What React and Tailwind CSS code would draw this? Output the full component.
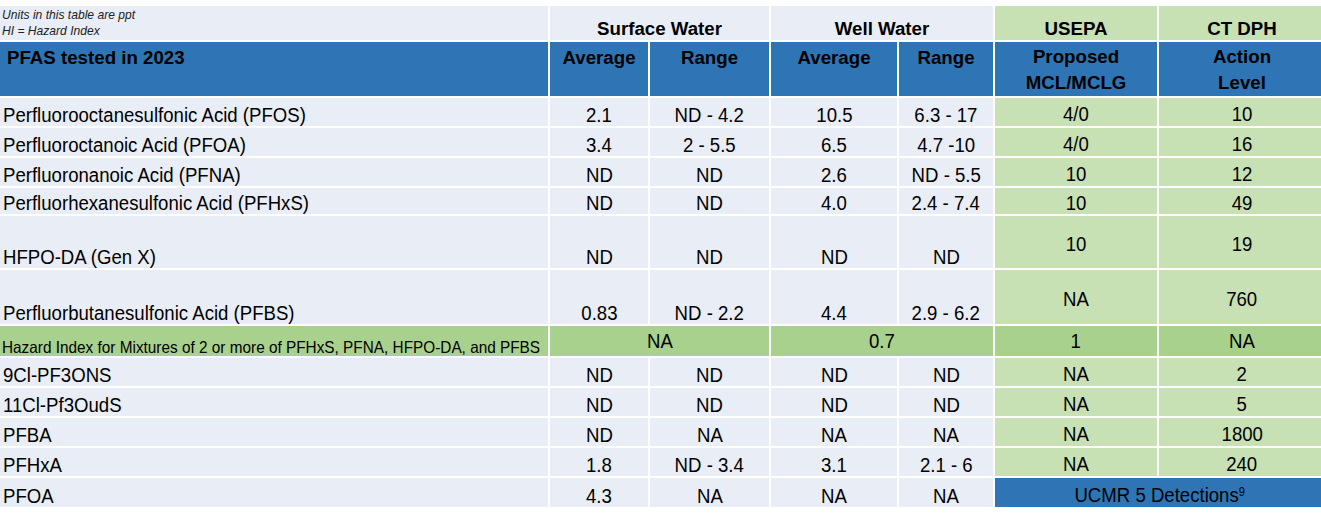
export default function App() {
  const font = { fontFamily: '"Liberation Sans", Arial, sans-serif' };

  const rows = [
    { name: "Perfluorooctanesulfonic Acid (PFOS)", h: "h-[28px]", v: ["2.1", "ND - 4.2", "10.5", "6.3 - 17"], epa: "4/0", ct: "10" },
    { name: "Perfluoroctanoic Acid (PFOA)", h: "h-[28px]", v: ["3.4", "2 - 5.5", "6.5", "4.7 -10"], epa: "4/0", ct: "16" },
    { name: "Perfluoronanoic Acid (PFNA)", h: "h-[28px]", v: ["ND", "ND", "2.6", "ND - 5.5"], epa: "10", ct: "12" },
    { name: "Perfluorhexanesulfonic Acid (PFHxS)", h: "h-[26px]", v: ["ND", "ND", "4.0", "2.4 - 7.4"], epa: "10", ct: "49" },
    { name: "HFPO-DA (Gen X)", h: "h-[52px]", v: ["ND", "ND", "ND", "ND"], epa: "10", ct: "19" },
    { name: "Perfluorbutanesulfonic Acid (PFBS)", h: "h-[54px]", v: ["0.83", "ND - 2.2", "4.4", "2.9 - 6.2"], epa: "NA", ct: "760" },
  ];

  const rows2 = [
    { name: "9Cl-PF3ONS", h: "h-[28px]", v: ["ND", "ND", "ND", "ND"], epa: "NA", ct: "2" },
    { name: "11Cl-Pf3OudS", h: "h-[28px]", v: ["ND", "ND", "ND", "ND"], epa: "NA", ct: "5" },
    { name: "PFBA", h: "h-[28px]", v: ["ND", "NA", "NA", "NA"], epa: "NA", ct: "1800" },
    { name: "PFHxA", h: "h-[28px]", v: ["1.8", "ND - 3.4", "3.1", "2.1 - 6"], epa: "NA", ct: "240" },
  ];

  const light = "bg-[#e9edf5]";
  const blue = "bg-[#2e75b6]";
  const hi = "bg-[#a9d18e]";
  const top = "flex items-end justify-center pb-[1px] text-[18.7px] font-bold leading-none";
  const head = "pt-[4px] text-center text-[18.7px] font-bold leading-[24px]";

  return (
    <div className="bg-white w-[1321px] h-[522px] pt-[6px] text-black" style={font}>
      <div className="grid grid-cols-[548px_98px_119px_126px_94px_162px_166px] gap-[2px]">
        {/* header row 1 */}
        <div className={`${light} h-[34px] pl-[2px] pt-[1px] flex flex-col text-[13px] italic leading-[16px] text-[#222]`}>
          <N left>Units in this table are ppt</N>
          <N left>HI = Hazard Index</N>
        </div>
        <div className={`${light} col-span-2 ${top}`}>Surface Water</div>
        <div className={`${light} col-span-2 ${top}`}>Well Water</div>
        <div className={`bg-[#c7e1b5] ${top}`}>USEPA</div>
        <div className={`bg-[#c7e1b5] ${top}`}>CT DPH</div>

        {/* header row 2 */}
        <div className={`${blue} h-[54px] pl-[7px] pt-[4px] text-[18.7px] font-bold leading-[24px]`}>PFAS tested in 2023</div>
        <div className={`${blue} ${head}`}>Average</div>
        <div className={`${blue} ${head}`}>Range</div>
        <div className={`${blue} ${head}`}>Average</div>
        <div className={`${blue} ${head}`}>Range</div>
        <div className={`${blue} pt-[2px] text-center text-[18.7px] font-bold leading-[26px]`}>Proposed<br />MCL/MCLG</div>
        <div className={`${blue} pt-[2px] text-center text-[18.7px] font-bold leading-[26px]`}>Action<br />Level</div>

        {rows.map((r) => (
          <Row key={r.name} r={r} light={light} />
        ))}

        {/* hazard index */}
        <div className={`${hi} h-[30px] flex items-end pl-[2px] pb-[1px] text-[16.5px] leading-none`}>
          <N left>Hazard Index for Mixtures of 2 or more of PFHxS, PFNA, HFPO-DA, and PFBS</N>
        </div>
        <div className={`${hi} col-span-2 flex items-center justify-center text-[20px] leading-none`}><N>NA</N></div>
        <div className={`${hi} col-span-2 flex items-center justify-center text-[20px] leading-none`}><N>0.7</N></div>
        <div className={`${hi} flex items-center justify-center text-[20px] leading-none`}><N>1</N></div>
        <div className={`${hi} flex items-center justify-center text-[20px] leading-none`}><N>NA</N></div>

        {rows2.map((r) => (
          <Row key={r.name} r={r} light={light} />
        ))}

        {/* last row */}
        <div className={`${light} h-[29px] flex items-end pl-[3px] pb-[1px] text-[20px] leading-none`}><N left>PFOA</N></div>
        {["4.3", "NA", "NA", "NA"].map((x, i) => (
          <div key={i} className={`${light} flex items-end justify-center pb-[1px] text-[20px] leading-none`}><N>{x}</N></div>
        ))}
        <div className={`${blue} col-span-2 flex items-end justify-center pb-[2px] text-[20px] leading-none`}>
          <N>
            UCMR 5 Detections<sup className="text-[12px]">9</sup>
          </N>
        </div>
      </div>
    </div>
  );
}

// slightly condensed text, like the narrow face in the original
function N({ children, left }) {
  return <span className={`inline-block whitespace-nowrap scale-x-[0.93] ${left ? "origin-left" : "origin-center"}`}>{children}</span>;
}

function Row({ r, light }) {
  return (
    <>
      <div className={`${light} ${r.h} flex items-end pl-[3px] pb-[1px] text-[20px] leading-none`}><N left>{r.name}</N></div>
      {r.v.map((x, i) => (
        <div key={i} className={`${light} flex items-end justify-center pb-[1px] text-[20px] leading-none`}><N>{x}</N></div>
      ))}
      <div className="bg-[#c7e1b5] flex items-center justify-center pt-[4px] text-[20px] leading-none"><N>{r.epa}</N></div>
      <div className="bg-[#c7e1b5] flex items-center justify-center pt-[4px] text-[20px] leading-none"><N>{r.ct}</N></div>
    </>
  );
}
